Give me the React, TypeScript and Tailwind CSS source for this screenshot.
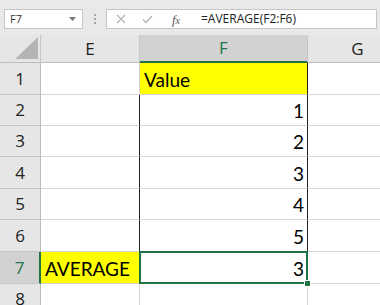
import React from "react";

const GRID = "border-[#d4d4d4]";
const HEAD = "bg-[#e6e6e6]";

function ColHead({ label, active, w }: { label: string; active?: boolean; w: string }) {
  return (
    <div
      className={`${w} h-[28px] shrink-0 flex items-center justify-center border-r border-[#c6c6c6] ${
        active ? "bg-[#d2d2d2] text-[#217346] border-b-2 border-b-[#217346]" : `${HEAD} text-[#222] border-b border-b-[#bdbdbd]`
      } text-[17px]`}
      style={{ fontFamily: '"Open Sans", "Noto Sans", sans-serif' }}
    >
      {label}
    </div>
  );
}

function RowHead({ n, active, h }: { n: number; active?: boolean; h: string }) {
  return (
    <div
      className={`w-[41px] ${h} shrink-0 flex items-center justify-center border-b border-[#c6c6c6] ${
        active ? "bg-[#d2d2d2] text-[#217346] border-r-2 border-r-[#217346]" : `${HEAD} text-[#222] border-r border-r-[#bdbdbd]`
      } text-[17px]`}
      style={{ fontFamily: '"Open Sans", "Noto Sans", sans-serif' }}
    >
      {n}
    </div>
  );
}

type RowDef = {
  n: number;
  h: string;
  e?: string;
  eYellow?: boolean;
  eDark?: boolean;
  f?: string;
  fYellow?: boolean;
  fDark?: boolean;
  fAlign?: "left" | "right";
  selected?: boolean;
};

const rows: RowDef[] = [
  { n: 1, h: "h-[32px]", f: "Value", fYellow: true, fDark: true, fAlign: "left" },
  { n: 2, h: "h-[31px]", f: "1", eDark: true, fDark: true },
  { n: 3, h: "h-[31px]", f: "2", eDark: true, fDark: true },
  { n: 4, h: "h-[32px]", f: "3", eDark: true, fDark: true },
  { n: 5, h: "h-[31px]", f: "4", eDark: true, fDark: true },
  { n: 6, h: "h-[32px]", f: "5", eDark: true, fDark: true },
  { n: 7, h: "h-[32px]", e: "AVERAGE", eYellow: true, f: "3", selected: true },
  { n: 8, h: "h-[31px]" },
];

const cellFont = { fontFamily: 'Lato, "Liberation Sans", sans-serif' };

export default function App() {
  return (
    <div className="w-[380px] h-[305px] overflow-hidden bg-white relative">
      {/* formula bar */}
      <div className="h-[35px] bg-[#e9e9e9] flex items-start pt-[9px] pl-[4px]">
        <div
          className="w-[79px] h-[20px] bg-white border border-[#c6c6c6] flex items-center justify-between pl-[5px] pr-[6px] text-[11px] text-[#333]"
          style={{ fontFamily: '"Open Sans", "Noto Sans", sans-serif' }}
        >
          <span>F7</span>
          <svg width="7" height="4" viewBox="0 0 7 4">
            <path d="M0 0h7L3.5 4z" fill="#777" />
          </svg>
        </div>
        <div className="w-[23px] h-[20px] flex flex-col items-center justify-center gap-[2px]">
          <div className="w-[2px] h-[2px] bg-[#a8a8a8]" />
          <div className="w-[2px] h-[2px] bg-[#a8a8a8]" />
          <div className="w-[2px] h-[2px] bg-[#a8a8a8]" />
        </div>
        <div className="flex-1 mr-[3px] h-[20px] bg-white border border-[#c6c6c6] flex items-center">
          <div className="w-[28px] flex justify-center">
            <svg width="10" height="10" viewBox="0 0 10 10">
              <path d="M1 1L9 9M9 1L1 9" stroke="#b4b4b4" strokeWidth="1.2" />
            </svg>
          </div>
          <div className="w-[24px] flex justify-center">
            <svg width="11" height="9" viewBox="0 0 11 9">
              <path d="M1 4.5L4 7.5L10 1" stroke="#b4b4b4" strokeWidth="1.4" fill="none" />
            </svg>
          </div>
          <div
            className="w-[34px] flex justify-center items-baseline italic text-[#555] leading-none"
            style={{ fontFamily: '"Liberation Serif", serif' }}
          >
            <span className="text-[13px]">f</span>
            <span className="text-[10px]">x</span>
          </div>
          <div
            className="pl-[8px] text-[12px] text-[#222]"
            style={{ fontFamily: '"Open Sans", "Noto Sans", sans-serif' }}
          >
            =AVERAGE(F2:F6)
          </div>
        </div>
      </div>

      {/* column headers */}
      <div className="flex">
        <div className={`w-[41px] h-[28px] shrink-0 ${HEAD} border-r border-[#c6c6c6] border-b border-b-[#bdbdbd] flex items-end justify-end pr-[2px] pb-[3px]`}>
          <svg width="23" height="22" viewBox="0 0 23 22">
            <path d="M23 0V22H0z" fill="#b4b4b4" />
          </svg>
        </div>
        <ColHead label="E" w="w-[99px]" />
        <ColHead label="F" w="w-[168px]" active />
        <ColHead label="G" w="w-[100px]" />
      </div>

      {/* rows */}
      {rows.map((r) => (
        <div key={r.n} className="flex">
          <RowHead n={r.n} h={r.h} active={r.selected} />
          <div
            className={`w-[99px] ${r.h} shrink-0 border-b ${GRID} border-r ${
              r.eDark ? "border-r-[#222]" : ""
            } ${r.eYellow ? "bg-[#ffff00]" : ""} flex items-center pl-[4px] pt-[3px] text-[19px] text-black`}
            style={cellFont}
          >
            {r.e}
          </div>
          <div
            className={`w-[168px] ${r.h} shrink-0 relative border-b ${GRID} border-r ${
              r.fDark ? "border-r-[#222]" : ""
            } ${r.fYellow ? "bg-[#ffff00]" : ""} flex items-center pt-[3px] ${
              r.fAlign === "left" ? "justify-start pl-[4px]" : "justify-end pr-[3px]"
            } text-[19px] text-black`}
            style={cellFont}
          >
            {r.f}
            {r.selected && (
              <>
                <div className="absolute -left-[1px] -top-[1px] -right-[1px] -bottom-[1px] border-2 border-[#217346] pointer-events-none" />
                <div className="absolute -right-[4px] -bottom-[4px] w-[7px] h-[7px] bg-[#217346] border border-white z-10" />
              </>
            )}
          </div>
          <div className={`w-[100px] ${r.h} shrink-0 border-b ${GRID} border-r`} />
        </div>
      ))}
    </div>
  );
}
